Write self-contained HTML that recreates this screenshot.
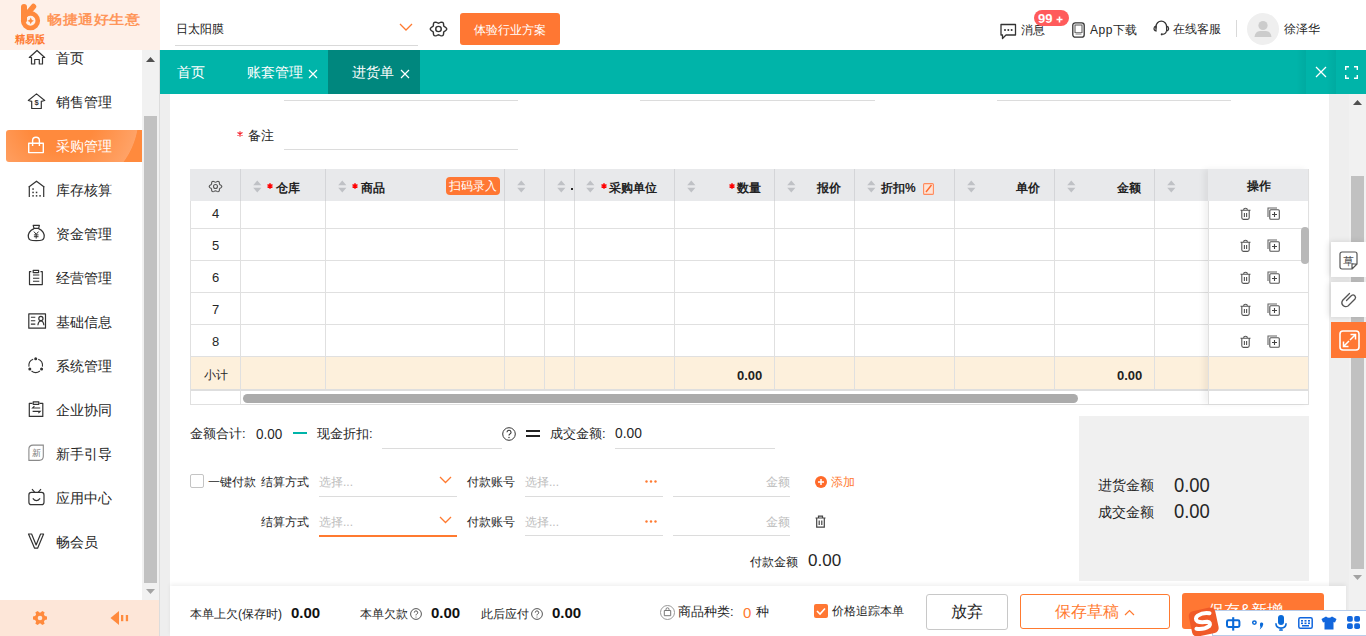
<!DOCTYPE html>
<html><head><meta charset="utf-8">
<style>
*{box-sizing:border-box;margin:0;padding:0}
html,body{width:1366px;height:636px;overflow:hidden;background:#fff;font-family:"Liberation Sans",sans-serif;color:#262626}
.a{position:absolute}
.t{position:absolute;white-space:nowrap}
.f12{font-size:12px;line-height:12px}
.f13{font-size:13px;line-height:13px}
.f14{font-size:14px;line-height:14px}
.f16{font-size:16px;line-height:16px}
svg{position:absolute;overflow:visible}
</style></head><body>

<!-- ============ SIDEBAR ============ -->
<div class="a" style="left:0;top:0;width:160px;height:50px;background:#fef0e8"></div>
<div class="a" style="left:0;top:50px;width:142px;height:550px;background:#fff"></div>
<svg style="left:0;top:0" width="60" height="50">
 <path d="M24 7V20" stroke="#ff8a3d" stroke-width="6" stroke-linecap="round" fill="none"/>
 <path d="M33.5 6.5L28 13" stroke="#ff8a3d" stroke-width="5.5" stroke-linecap="round" fill="none"/>
 <circle cx="30.5" cy="20.7" r="7.3" stroke="#ff8a3d" stroke-width="4.6" fill="none"/>
 <path d="M30.7 17.5Q31.2 20.2 34 20.8Q31.2 21.4 30.7 24.2Q30.2 21.4 27.4 20.8Q30.2 20.2 30.7 17.5Z" fill="#ff8a3d"/>
</svg>
<div class="t" style="left:47px;top:13px;font-size:15px;line-height:15px;font-weight:bold;color:#ff965a;letter-spacing:0.6px;transform:scaleY(0.86);transform-origin:0 0">畅捷通好生意</div>
<div class="t" style="left:15px;top:33px;font-size:11px;line-height:12px;font-weight:bold;color:#ff7a30;transform:scaleX(0.92);transform-origin:0 0">精易版</div>
<div class="a" style="left:0;top:600px;width:159px;height:36px;background:#fde6d8"></div>
<!-- bottom icons -->
<svg style="left:32px;top:610px" width="16" height="16" viewBox="0 0 16 16">
 <path transform="rotate(90 8 8)" d="M6.6 1H9.4L9.9 3.1L11.6 4.1L13.7 3.4L15.1 5.8L13.5 7.3V8.7L15.1 10.2L13.7 12.6L11.6 11.9L9.9 12.9L9.4 15H6.6L6.1 12.9L4.4 11.9L2.3 12.6L0.9 10.2L2.5 8.7V7.3L0.9 5.8L2.3 3.4L4.4 4.1L6.1 3.1Z" fill="#ff8a3d"/>
 <circle cx="8" cy="8" r="2.3" fill="#fde6d8"/>
</svg>
<svg style="left:110px;top:610px" width="20" height="16" viewBox="0 0 20 16">
 <path d="M0.5 8L9 1V15Z" fill="#ff8a3d"/>
 <rect x="11" y="5" width="2.3" height="6.2" fill="#ff8a3d"/>
 <rect x="15.8" y="5" width="2.3" height="6.2" fill="#ff8a3d"/>
</svg>
<!-- menu -->
<svg style="left:20px;top:44px" width="32" height="28" viewBox="20 44 32 28"><path d="M31.5 64V57.5H29.3L37 50.5L44.7 57.5H42.5V64H39.3V59.5H34.7V64Z" stroke="#333" stroke-width="1.2" fill="none" stroke-linejoin="round"/></svg>
<div class="t f14" style="left:56px;top:51px;color:#262626">首页</div>
<svg style="left:20px;top:88px" width="32" height="28" viewBox="20 88 32 28"><path d="M28.3 100.5L36.5 93.9L44.7 100.5L41.3 101.3V108.5H31.7V101.3Z" stroke="#333" stroke-width="1.2" fill="none" stroke-linejoin="round"/><text x="36.5" y="105.3" font-size="7.5" text-anchor="middle" fill="#333" font-family="Liberation Sans" font-weight="bold">$</text></svg>
<div class="t f14" style="left:56px;top:95px;color:#262626">销售管理</div>
<div class="a" style="left:6px;top:130px;width:136px;height:32px;border-radius:3px 0 0 3px;background:radial-gradient(circle 78px at 55px -14px,#ff8a3d 0%,#ff8a3d 45%,#ffa266 99%,#ff8a3d 100%)"></div>
<svg style="left:20px;top:132px" width="32" height="28" viewBox="20 132 32 28"><path d="M28.7 143.2H43.3V152.6H28.7Z M32.6 146V140.7A3.4 3.4 0 0 1 39.4 140.7V146" stroke="#fff" stroke-width="1.4" fill="none" stroke-linejoin="round"/></svg>
<div class="t f14" style="left:56px;top:139px;color:#fff">采购管理</div>
<svg style="left:20px;top:176px" width="32" height="28" viewBox="20 176 32 28"><path d="M28.5 187.2L36.5 181.2L44.5 187.2M29.3 186.6V197M43.7 186.6V197" stroke="#333" stroke-width="1.2" fill="none" stroke-linejoin="round"/><g fill="#333"><rect x="32.3" y="188.3" width="1.5" height="1.5"/><rect x="32.3" y="191.7" width="1.5" height="1.5"/><rect x="35.8" y="191.7" width="1.5" height="1.5"/><rect x="32.3" y="195.1" width="1.5" height="1.5"/><rect x="35.8" y="195.1" width="1.5" height="1.5"/><rect x="39.3" y="195.1" width="1.5" height="1.5"/></g></svg>
<div class="t f14" style="left:56px;top:183px;color:#262626">库存核算</div>
<svg style="left:20px;top:220px" width="32" height="28" viewBox="20 220 32 28"><path d="M33.2 225.4H39.4L38.6 228.4H34Z" stroke="#333" stroke-width="1.2" fill="none" stroke-linejoin="round"/><path d="M34 228.6C29 231 28 235 28.4 237.4C28.9 240 30.5 240.6 36.2 240.6C42 240.6 43.6 240 44.1 237.4C44.5 235 43.5 231 38.6 228.6" stroke="#333" stroke-width="1.2" fill="none" stroke-linejoin="round"/><path d="M33.9 231.6L36.2 234.3L38.5 231.6M36.2 234.3V238.6M33.9 234.9H38.5M33.9 236.7H38.5" stroke="#333" stroke-width="1" fill="none"/></svg>
<div class="t f14" style="left:56px;top:227px;color:#262626">资金管理</div>
<svg style="left:20px;top:264px" width="32" height="28" viewBox="20 264 32 28"><path d="M31.3 271.6H29.5V284.6H42.3V271.6H40.5" stroke="#333" stroke-width="1.2" fill="none" stroke-linejoin="round"/><path d="M33.2 272.6V270.3H38.6V272.6Z" stroke="#333" stroke-width="1.2" fill="none" stroke-linejoin="round"/><path d="M33 275H39.3M33 278.2H39.3M33 281.3H39.3" stroke="#333" stroke-width="1.1" fill="none"/></svg>
<div class="t f14" style="left:56px;top:271px;color:#262626">经营管理</div>
<svg style="left:20px;top:308px" width="32" height="28" viewBox="20 308 32 28"><path d="M28.8 313.9H45.5V328.2H28.8Z" stroke="#333" stroke-width="1.2" fill="none" stroke-linejoin="round"/><path d="M30.9 317.3H35.3M30.9 320.7H35.3M30.9 324.1H35.3" stroke="#333" stroke-width="1.1" fill="none"/><circle cx="40.9" cy="318.4" r="2.1" stroke="#333" stroke-width="1.2" fill="none" stroke-linejoin="round"/><path d="M37.9 325.3Q38.3 321 40.9 320.8Q43.5 321 43.9 325.3" stroke="#333" stroke-width="1.2" fill="none" stroke-linejoin="round"/></svg>
<div class="t f14" style="left:56px;top:315px;color:#262626">基础信息</div>
<svg style="left:20px;top:352px" width="32" height="28" viewBox="20 352 32 28"><path d="M38.25 359.30A6.8 6.8 0 0 1 42.43 366.55M39.89 370.96A6.8 6.8 0 0 1 31.51 370.96M28.97 366.55A6.8 6.8 0 0 1 33.15 359.30" stroke="#333" stroke-width="1.1" fill="none"/><circle cx="35.70" cy="358.80" r="1.5" fill="#333"/><circle cx="41.59" cy="369.00" r="1.5" fill="#333"/><circle cx="29.81" cy="369.00" r="1.5" fill="#333"/></svg>
<div class="t f14" style="left:56px;top:359px;color:#262626">系统管理</div>
<svg style="left:20px;top:396px" width="32" height="28" viewBox="20 396 32 28"><path d="M32.5 403.3H29.3V416.4H42.8V403.3H39.5" stroke="#333" stroke-width="1.2" fill="none" stroke-linejoin="round"/><path d="M33.2 404.3V401.8H38.8V404.3Z" stroke="#333" stroke-width="1.2" fill="none" stroke-linejoin="round"/><path d="M40.2 408H32.6L34.4 406.2M32.6 411.4H40.2L38.4 413.2" stroke="#333" stroke-width="1.1" fill="none"/></svg>
<div class="t f14" style="left:56px;top:403px;color:#262626">企业协同</div>
<svg style="left:20px;top:440px" width="32" height="28" viewBox="20 440 32 28"><path d="M28.9 449.2Q28.9 445.1 33 445.1H43.3V456.3Q43.3 460.4 39.2 460.4H28.9Z" stroke="#8a8a8a" stroke-width="1.1" fill="none"/><text x="36.1" y="456.4" font-size="9" text-anchor="middle" fill="#777">新</text></svg>
<div class="t f14" style="left:56px;top:447px;color:#262626">新手引导</div>
<svg style="left:20px;top:484px" width="32" height="28" viewBox="20 484 32 28"><rect x="28.9" y="492.4" width="15.1" height="12.3" rx="2.5" stroke="#333" stroke-width="1.2" fill="none" stroke-linejoin="round"/><path d="M32 489.2L34.8 492.3M41 489.2L38.2 492.3" stroke="#333" stroke-width="1.2" fill="none" stroke-linejoin="round"/><path d="M32.8 498.4Q36.4 503 40.1 498.4" stroke="#333" stroke-width="1.2" fill="none" stroke-linejoin="round"/></svg>
<div class="t f14" style="left:56px;top:491px;color:#262626">应用中心</div>
<svg style="left:20px;top:528px" width="32" height="28" viewBox="20 528 32 28"><path d="M28.5 534H31.6L36.1 545L40.6 534H43.6L37.6 548.2H34.6Z" stroke="#333" stroke-width="1.2" fill="none" stroke-linejoin="round"/></svg>
<div class="t f14" style="left:56px;top:535px;color:#262626">畅会员</div>
<!-- sidebar scrollbar -->
<div class="a" style="left:142px;top:50px;width:17px;height:550px;background:#f1f1f1"></div>
<div class="a" style="left:159px;top:50px;width:1px;height:586px;background:#dcdcdc"></div>
<div class="a" style="left:144px;top:116px;width:13px;height:467px;background:#c1c1c1"></div>
<svg style="left:146px;top:57px" width="9" height="5"><path d="M0 5L4.5 0L9 5Z" fill="#505050"/></svg>
<svg style="left:146px;top:589px" width="9" height="5"><path d="M0 0L4.5 5L9 0Z" fill="#a3a3a3"/></svg>

<!-- ============ HEADER ============ -->
<div class="t f12" style="left:176px;top:23px;color:#222">日太阳膜</div>
<div class="a" style="left:175px;top:45px;width:243px;height:1px;background:#d9d9d9"></div>
<div class="a" style="left:460px;top:13px;width:100px;height:32px;background:#ff7733;border-radius:3px"></div>
<div class="t f12" style="left:474px;top:24px;color:#fff">体验行业方案</div>

<div class="t f12" style="left:1021px;top:24px;color:#262626">消息</div>
<div class="t f12" style="left:1090px;top:24px;color:#262626;letter-spacing:0.5px">App下载</div>
<div class="t f12" style="left:1173px;top:23px;color:#262626">在线客服</div>
<div class="a" style="left:1236px;top:20px;width:1px;height:17px;background:#d9d9d9"></div>
<div class="a" style="left:1247px;top:13px;width:32px;height:32px;border-radius:50%;background:#efefef"></div>
<div class="t f12" style="left:1284px;top:23px;color:#262626">徐泽华</div>
<svg style="left:399px;top:23px" width="14" height="8"><path d="M1 1L7 7L13 1" stroke="#ff7a30" stroke-width="1.3" fill="none"/></svg>
<svg style="left:430px;top:21px" width="17" height="16" viewBox="0 0 13 13" preserveAspectRatio="none">
 <path d="M12.80 6.50 L12.51 7.29 L11.81 7.92 L11.06 8.39 L10.57 8.85 L10.41 9.50 L10.39 10.39 L10.19 11.31 L9.65 11.96 L8.82 12.10 L7.92 11.81 L7.14 11.39 L6.50 11.20 L5.86 11.39 L5.08 11.81 L4.18 12.10 L3.35 11.96 L2.81 11.31 L2.61 10.39 L2.59 9.50 L2.43 8.85 L1.94 8.39 L1.19 7.92 L0.49 7.29 L0.20 6.50 L0.49 5.71 L1.19 5.08 L1.94 4.61 L2.43 4.15 L2.59 3.50 L2.61 2.61 L2.81 1.69 L3.35 1.04 L4.18 0.90 L5.08 1.19 L5.86 1.61 L6.50 1.80 L7.14 1.61 L7.92 1.19 L8.82 0.90 L9.65 1.04 L10.19 1.69 L10.39 2.61 L10.41 3.50 L10.57 4.15 L11.06 4.61 L11.81 5.08 L12.51 5.71 L12.80 6.50Z" stroke="#333" stroke-width="1.1" fill="none"/>
 <circle cx="6.5" cy="6.5" r="2.1" stroke="#333" stroke-width="1.1" fill="none"/>
</svg>
<svg style="left:1000px;top:23px" width="17" height="17" viewBox="0 0 17 17">
 <path d="M1 1.5H15.5V12H6L2.5 15.5V12H1Z" stroke="#333" stroke-width="1.3" fill="none" stroke-linejoin="round"/>
 <circle cx="5" cy="7" r="1" fill="#333"/><circle cx="8.3" cy="7" r="1" fill="#333"/><circle cx="11.6" cy="7" r="1" fill="#333"/>
</svg>
<div class="a" style="left:1034px;top:10px;width:35px;height:16px;border-radius:8px;background:#ff5b5b"></div>
<div class="t" style="left:1038px;top:11.5px;font-size:13px;line-height:13px;font-weight:bold;color:#fff">99</div>
<svg style="left:1056px;top:16px" width="7" height="7"><path d="M3.5 0.5V6.5M0.5 3.5H6.5" stroke="#fff" stroke-width="1.6"/></svg>
<svg style="left:1072px;top:22px" width="13" height="16" viewBox="0 0 13 16">
 <rect x="0.8" y="0.8" width="11.4" height="14.4" rx="2.5" stroke="#333" stroke-width="1.3" fill="none"/>
 <rect x="3" y="3" width="7" height="7.5" fill="#fff" stroke="#555" stroke-width="1"/>
 <rect x="3.5" y="10.5" width="6" height="2.5" fill="#bbb"/>
</svg>
<svg style="left:1150px;top:16px" width="24" height="24" viewBox="1150 16 24 24">
 <path d="M1156 28.5V26.5A5.3 5.3 0 0 1 1166.6 26.5V28.5" stroke="#333" stroke-width="1.3" fill="none"/>
 <path d="M1156 26.2Q1154 26.5 1154 28.6Q1154 30.8 1156 31V26.2Z M1166.6 26.2Q1168.6 26.5 1168.6 28.6Q1168.6 30.8 1166.6 31V26.2Z" stroke="#333" stroke-width="1.2" fill="none"/>
 <path d="M1166.3 31.2Q1166 34 1162.5 34.3" stroke="#333" stroke-width="1.2" fill="none"/>
 <circle cx="1161.8" cy="34.3" r="1.1" fill="#333"/>
</svg>
<svg style="left:1247px;top:13px" width="32" height="32" viewBox="0 0 32 32">
 <circle cx="16" cy="12.5" r="4.6" fill="#cccccc"/>
 <path d="M7.5 24Q8 18.5 13 18H19Q24 18.5 24.5 24Z" fill="#cccccc"/>
</svg>

<!-- ============ TAB BAR ============ -->
<div class="a" style="left:160px;top:50px;width:1206px;height:44px;background:#00b4a9"></div>
<div class="a" style="left:328px;top:50px;width:92px;height:44px;background:#00877e"></div>
<div class="t f14" style="left:177px;top:65px;color:#fff">首页</div>
<div class="t f14" style="left:247px;top:65px;color:#fff">账套管理</div>
<div class="t f14" style="left:352px;top:65px;color:#fff">进货单</div>
<svg style="left:308px;top:69px" width="10" height="10"><path d="M1 1L9 9M9 1L1 9" stroke="#fff" stroke-width="1.2"/></svg>
<svg style="left:400px;top:69px" width="10" height="10"><path d="M1 1L9 9M9 1L1 9" stroke="#fff" stroke-width="1.2"/></svg>
<div class="a" style="left:1296px;top:50px;width:10px;height:44px;background:linear-gradient(90deg,rgba(0,0,0,0),rgba(0,0,0,0.05))"></div>
<div class="a" style="left:1326px;top:50px;width:10px;height:44px;background:linear-gradient(90deg,rgba(0,0,0,0),rgba(0,0,0,0.05))"></div>
<svg style="left:1315px;top:66px" width="12" height="12"><path d="M1 1L11 11M11 1L1 11" stroke="#fff" stroke-width="1.3"/></svg>
<svg style="left:1345px;top:66px" width="13" height="13"><path d="M0.7 4V0.7H4M9 0.7H12.3V4M12.3 9V12.3H9M4 12.3H0.7V9" stroke="#fff" stroke-width="1.4" fill="none"/></svg>

<!-- ============ CONTENT ============ -->
<div class="a" style="left:160px;top:94px;width:1206px;height:542px;background:#eeeeee"></div>
<div class="a" style="left:170px;top:94px;width:1159px;height:492px;background:#fff"></div>
<!-- right scrollbar -->
<div class="a" style="left:1349px;top:94px;width:17px;height:542px;background:#f1f1f1"></div>
<div class="a" style="left:1351px;top:176px;width:13px;height:393px;background:#c1c1c1"></div>
<svg style="left:1353px;top:100px" width="9" height="5"><path d="M0 5L4.5 0L9 5Z" fill="#505050"/></svg>
<svg style="left:1353px;top:575px" width="9" height="5"><path d="M0 0L4.5 5L9 0Z" fill="#a3a3a3"/></svg>

<!--CONTENT-->
<div class="a" style="left:284px;top:100px;width:234px;height:1px;background:#dcdcdc;"></div>
<div class="a" style="left:640px;top:100px;width:235px;height:1px;background:#dcdcdc;"></div>
<div class="a" style="left:997px;top:100px;width:234px;height:1px;background:#dcdcdc;"></div>
<svg style="left:237px;top:131px" width="6" height="6" viewBox="0 0 6 6"><path d="M3 0.2V5.8M0.5 1.5L5.5 4.5M0.5 4.5L5.5 1.5" stroke="#f5222d" stroke-width="1.1"/></svg>
<div class="t" style="left:248px;top:129px;font-size:13px;line-height:13px;color:#262626;">备注</div>
<div class="a" style="left:284px;top:149px;width:234px;height:1px;background:#dcdcdc;"></div>
<div class="a" style="left:190px;top:169px;width:1119px;height:235px;background:#fff;"></div>
<div class="a" style="left:190px;top:228px;width:1018px;height:1px;background:#e0e0e0;"></div>
<div class="a" style="left:190px;top:260px;width:1018px;height:1px;background:#e0e0e0;"></div>
<div class="a" style="left:190px;top:292px;width:1018px;height:1px;background:#e0e0e0;"></div>
<div class="a" style="left:190px;top:324px;width:1018px;height:1px;background:#e0e0e0;"></div>
<div class="a" style="left:190px;top:356px;width:1018px;height:1px;background:#e0e0e0;"></div>
<div class="a" style="left:191px;top:357px;width:1017px;height:32px;background:#fdf0dc;"></div>
<div class="a" style="left:190px;top:389px;width:1018px;height:2px;background:#dedede;"></div>
<div class="a" style="left:190px;top:404px;width:1119px;height:1px;background:#e0e0e0;"></div>
<div class="a" style="left:240px;top:169px;width:1px;height:235px;background:#e0e0e0;"></div>
<div class="a" style="left:325px;top:169px;width:1px;height:220px;background:#e0e0e0;"></div>
<div class="a" style="left:504px;top:169px;width:1px;height:220px;background:#e0e0e0;"></div>
<div class="a" style="left:544px;top:169px;width:1px;height:220px;background:#e0e0e0;"></div>
<div class="a" style="left:574px;top:169px;width:1px;height:220px;background:#e0e0e0;"></div>
<div class="a" style="left:674px;top:169px;width:1px;height:220px;background:#e0e0e0;"></div>
<div class="a" style="left:774px;top:169px;width:1px;height:220px;background:#e0e0e0;"></div>
<div class="a" style="left:854px;top:169px;width:1px;height:220px;background:#e0e0e0;"></div>
<div class="a" style="left:954px;top:169px;width:1px;height:220px;background:#e0e0e0;"></div>
<div class="a" style="left:1054px;top:169px;width:1px;height:220px;background:#e0e0e0;"></div>
<div class="a" style="left:1154px;top:169px;width:1px;height:220px;background:#e0e0e0;"></div>
<div class="a" style="left:190px;top:169px;width:1px;height:236px;background:#e0e0e0;"></div>
<div class="a" style="left:190px;top:169px;width:1119px;height:32px;background:#e8e9eb;"></div>
<div class="a" style="left:240px;top:169px;width:1px;height:32px;background:#d4d5d8;"></div>
<div class="a" style="left:325px;top:169px;width:1px;height:32px;background:#d4d5d8;"></div>
<div class="a" style="left:504px;top:169px;width:1px;height:32px;background:#d4d5d8;"></div>
<div class="a" style="left:544px;top:169px;width:1px;height:32px;background:#d4d5d8;"></div>
<div class="a" style="left:574px;top:169px;width:1px;height:32px;background:#d4d5d8;"></div>
<div class="a" style="left:674px;top:169px;width:1px;height:32px;background:#d4d5d8;"></div>
<div class="a" style="left:774px;top:169px;width:1px;height:32px;background:#d4d5d8;"></div>
<div class="a" style="left:854px;top:169px;width:1px;height:32px;background:#d4d5d8;"></div>
<div class="a" style="left:954px;top:169px;width:1px;height:32px;background:#d4d5d8;"></div>
<div class="a" style="left:1054px;top:169px;width:1px;height:32px;background:#d4d5d8;"></div>
<div class="a" style="left:1154px;top:169px;width:1px;height:32px;background:#d4d5d8;"></div>
<div class="a" style="left:1208px;top:169px;width:101px;height:235px;background:#fff;box-shadow:-4px 0 6px rgba(0,0,0,0.06)"></div>
<div class="a" style="left:1208px;top:169px;width:101px;height:32px;background:#e8e9eb;"></div>
<div class="a" style="left:1208px;top:228px;width:101px;height:1px;background:#e0e0e0;"></div>
<div class="a" style="left:1208px;top:260px;width:101px;height:1px;background:#e0e0e0;"></div>
<div class="a" style="left:1208px;top:292px;width:101px;height:1px;background:#e0e0e0;"></div>
<div class="a" style="left:1208px;top:324px;width:101px;height:1px;background:#e0e0e0;"></div>
<div class="a" style="left:1208px;top:356px;width:101px;height:1px;background:#e0e0e0;"></div>
<div class="a" style="left:1209px;top:357px;width:100px;height:32px;background:#fdf0dc;"></div>
<div class="a" style="left:1208px;top:389px;width:101px;height:2px;background:#dedede;"></div>
<div class="a" style="left:1208px;top:201px;width:1px;height:203px;background:#e0e0e0;"></div>
<div class="a" style="left:1308px;top:169px;width:1px;height:236px;background:#e0e0e0;"></div>
<div class="a" style="left:1301px;top:227px;width:8px;height:37px;background:#b8b8b8;border-radius:4px"></div>
<div class="a" style="left:243px;top:394px;width:835px;height:9px;background:#ababab;border-radius:4.5px"></div>
<svg style="left:209px;top:180px" width="13" height="13" viewBox="0 0 13 13"><path d="M12.80 6.50 L12.51 7.29 L11.81 7.92 L11.06 8.39 L10.57 8.85 L10.41 9.50 L10.39 10.39 L10.19 11.31 L9.65 11.96 L8.82 12.10 L7.92 11.81 L7.14 11.39 L6.50 11.20 L5.86 11.39 L5.08 11.81 L4.18 12.10 L3.35 11.96 L2.81 11.31 L2.61 10.39 L2.59 9.50 L2.43 8.85 L1.94 8.39 L1.19 7.92 L0.49 7.29 L0.20 6.50 L0.49 5.71 L1.19 5.08 L1.94 4.61 L2.43 4.15 L2.59 3.50 L2.61 2.61 L2.81 1.69 L3.35 1.04 L4.18 0.90 L5.08 1.19 L5.86 1.61 L6.50 1.80 L7.14 1.61 L7.92 1.19 L8.82 0.90 L9.65 1.04 L10.19 1.69 L10.39 2.61 L10.41 3.50 L10.57 4.15 L11.06 4.61 L11.81 5.08 L12.51 5.71 L12.80 6.50Z" stroke="#555" stroke-width="1.1" fill="none" transform="translate(6.5 6.5) scale(1 0.92) translate(-6.5 -6.5)"/><circle cx="6.5" cy="6.5" r="2" stroke="#555" stroke-width="1.1" fill="none"/></svg>
<svg style="left:253px;top:180px" width="9" height="13" viewBox="0 0 9 13"><path d="M0.2 5.2L4.3 0.4L8.4 5.2Z M0.2 7.8L4.3 12.6L8.4 7.8Z" fill="#bfc1c5"/></svg>
<svg style="left:338px;top:180px" width="9" height="13" viewBox="0 0 9 13"><path d="M0.2 5.2L4.3 0.4L8.4 5.2Z M0.2 7.8L4.3 12.6L8.4 7.8Z" fill="#bfc1c5"/></svg>
<svg style="left:517px;top:180px" width="9" height="13" viewBox="0 0 9 13"><path d="M0.2 5.2L4.3 0.4L8.4 5.2Z M0.2 7.8L4.3 12.6L8.4 7.8Z" fill="#bfc1c5"/></svg>
<svg style="left:557px;top:180px" width="9" height="13" viewBox="0 0 9 13"><path d="M0.2 5.2L4.3 0.4L8.4 5.2Z M0.2 7.8L4.3 12.6L8.4 7.8Z" fill="#bfc1c5"/></svg>
<svg style="left:586px;top:180px" width="9" height="13" viewBox="0 0 9 13"><path d="M0.2 5.2L4.3 0.4L8.4 5.2Z M0.2 7.8L4.3 12.6L8.4 7.8Z" fill="#bfc1c5"/></svg>
<svg style="left:687px;top:180px" width="9" height="13" viewBox="0 0 9 13"><path d="M0.2 5.2L4.3 0.4L8.4 5.2Z M0.2 7.8L4.3 12.6L8.4 7.8Z" fill="#bfc1c5"/></svg>
<svg style="left:787px;top:180px" width="9" height="13" viewBox="0 0 9 13"><path d="M0.2 5.2L4.3 0.4L8.4 5.2Z M0.2 7.8L4.3 12.6L8.4 7.8Z" fill="#bfc1c5"/></svg>
<svg style="left:867px;top:180px" width="9" height="13" viewBox="0 0 9 13"><path d="M0.2 5.2L4.3 0.4L8.4 5.2Z M0.2 7.8L4.3 12.6L8.4 7.8Z" fill="#bfc1c5"/></svg>
<svg style="left:967px;top:180px" width="9" height="13" viewBox="0 0 9 13"><path d="M0.2 5.2L4.3 0.4L8.4 5.2Z M0.2 7.8L4.3 12.6L8.4 7.8Z" fill="#bfc1c5"/></svg>
<svg style="left:1067px;top:180px" width="9" height="13" viewBox="0 0 9 13"><path d="M0.2 5.2L4.3 0.4L8.4 5.2Z M0.2 7.8L4.3 12.6L8.4 7.8Z" fill="#bfc1c5"/></svg>
<svg style="left:1167px;top:180px" width="9" height="13" viewBox="0 0 9 13"><path d="M0.2 5.2L4.3 0.4L8.4 5.2Z M0.2 7.8L4.3 12.6L8.4 7.8Z" fill="#bfc1c5"/></svg>
<svg style="left:267px;top:183px" width="6" height="6" viewBox="0 0 6 6"><path d="M3 0.2V5.8M0.5 1.6L5.5 4.4M0.5 4.4L5.5 1.6" stroke="#f00" stroke-width="1.5"/></svg>
<div class="t" style="left:276px;top:182px;font-size:12px;line-height:12px;color:#222;font-weight:bold;">仓库</div>
<svg style="left:352px;top:183px" width="6" height="6" viewBox="0 0 6 6"><path d="M3 0.2V5.8M0.5 1.6L5.5 4.4M0.5 4.4L5.5 1.6" stroke="#f00" stroke-width="1.5"/></svg>
<div class="t" style="left:361px;top:182px;font-size:12px;line-height:12px;color:#222;font-weight:bold;">商品</div>
<div class="a" style="left:446px;top:177px;width:54px;height:18px;background:#ff7733;border-radius:4px"></div>
<div class="t" style="left:449px;top:180px;font-size:12px;line-height:12px;color:#fff;">扫码录入</div>
<div class="a" style="left:571px;top:188px;width:2px;height:2px;background:#262626;"></div>
<svg style="left:601px;top:183px" width="6" height="6" viewBox="0 0 6 6"><path d="M3 0.2V5.8M0.5 1.6L5.5 4.4M0.5 4.4L5.5 1.6" stroke="#f00" stroke-width="1.5"/></svg>
<div class="t" style="left:609px;top:182px;font-size:12px;line-height:12px;color:#222;font-weight:bold;">采购单位</div>
<svg style="left:729px;top:183px" width="6" height="6" viewBox="0 0 6 6"><path d="M3 0.2V5.8M0.5 1.6L5.5 4.4M0.5 4.4L5.5 1.6" stroke="#f00" stroke-width="1.5"/></svg>
<div class="t" style="left:737px;top:182px;font-size:12px;line-height:12px;color:#222;font-weight:bold;">数量</div>
<div class="t" style="left:817px;top:182px;font-size:12px;line-height:12px;color:#222;font-weight:bold;">报价</div>
<div class="t" style="left:881px;top:182px;font-size:12px;line-height:12px;color:#222;font-weight:bold;">折扣%</div>
<svg style="left:923px;top:182px" width="11" height="13" viewBox="0 0 11 13"><rect x="0.6" y="1.6" width="9.8" height="10.8" rx="1" stroke="#ff8a5c" stroke-width="1.1" fill="#fde3d6"/><path d="M3 10L8.5 3" stroke="#ff6a2a" stroke-width="1.4"/></svg>
<div class="t" style="left:1016px;top:182px;font-size:12px;line-height:12px;color:#222;font-weight:bold;">单价</div>
<div class="t" style="left:1117px;top:182px;font-size:12px;line-height:12px;color:#222;font-weight:bold;">金额</div>
<div class="t" style="left:1247px;top:180px;font-size:12px;line-height:12px;color:#222;font-weight:bold;">操作</div>
<div class="t" style="left:212px;top:207px;font-size:13px;line-height:13px;color:#262626;">4</div>
<svg style="left:1240px;top:207px" width="11" height="13" viewBox="0 0 11 13"><path d="M0.5 3.3H10.5M3.6 3.1A1.9 1.9 0 0 1 7.4 3.1M1.8 3.6V10.8Q1.8 12.4 3.4 12.4H7.6Q9.2 12.4 9.2 10.8V3.6M4.4 6V10M6.6 6V10" stroke="#555" stroke-width="1.1" fill="none"/></svg>
<svg style="left:1267px;top:207px" width="13" height="13" viewBox="0 0 13 13"><path d="M1 10V1H10" stroke="#666" stroke-width="1.1" fill="none"/><rect x="2.8" y="2.8" width="9.5" height="9.5" rx="1" stroke="#555" stroke-width="1.1" fill="#fff"/><path d="M7.5 5V10M5 7.5H10" stroke="#444" stroke-width="1.1"/></svg>
<div class="t" style="left:212px;top:239px;font-size:13px;line-height:13px;color:#262626;">5</div>
<svg style="left:1240px;top:239px" width="11" height="13" viewBox="0 0 11 13"><path d="M0.5 3.3H10.5M3.6 3.1A1.9 1.9 0 0 1 7.4 3.1M1.8 3.6V10.8Q1.8 12.4 3.4 12.4H7.6Q9.2 12.4 9.2 10.8V3.6M4.4 6V10M6.6 6V10" stroke="#555" stroke-width="1.1" fill="none"/></svg>
<svg style="left:1267px;top:239px" width="13" height="13" viewBox="0 0 13 13"><path d="M1 10V1H10" stroke="#666" stroke-width="1.1" fill="none"/><rect x="2.8" y="2.8" width="9.5" height="9.5" rx="1" stroke="#555" stroke-width="1.1" fill="#fff"/><path d="M7.5 5V10M5 7.5H10" stroke="#444" stroke-width="1.1"/></svg>
<div class="t" style="left:212px;top:271px;font-size:13px;line-height:13px;color:#262626;">6</div>
<svg style="left:1240px;top:271px" width="11" height="13" viewBox="0 0 11 13"><path d="M0.5 3.3H10.5M3.6 3.1A1.9 1.9 0 0 1 7.4 3.1M1.8 3.6V10.8Q1.8 12.4 3.4 12.4H7.6Q9.2 12.4 9.2 10.8V3.6M4.4 6V10M6.6 6V10" stroke="#555" stroke-width="1.1" fill="none"/></svg>
<svg style="left:1267px;top:271px" width="13" height="13" viewBox="0 0 13 13"><path d="M1 10V1H10" stroke="#666" stroke-width="1.1" fill="none"/><rect x="2.8" y="2.8" width="9.5" height="9.5" rx="1" stroke="#555" stroke-width="1.1" fill="#fff"/><path d="M7.5 5V10M5 7.5H10" stroke="#444" stroke-width="1.1"/></svg>
<div class="t" style="left:212px;top:303px;font-size:13px;line-height:13px;color:#262626;">7</div>
<svg style="left:1240px;top:303px" width="11" height="13" viewBox="0 0 11 13"><path d="M0.5 3.3H10.5M3.6 3.1A1.9 1.9 0 0 1 7.4 3.1M1.8 3.6V10.8Q1.8 12.4 3.4 12.4H7.6Q9.2 12.4 9.2 10.8V3.6M4.4 6V10M6.6 6V10" stroke="#555" stroke-width="1.1" fill="none"/></svg>
<svg style="left:1267px;top:303px" width="13" height="13" viewBox="0 0 13 13"><path d="M1 10V1H10" stroke="#666" stroke-width="1.1" fill="none"/><rect x="2.8" y="2.8" width="9.5" height="9.5" rx="1" stroke="#555" stroke-width="1.1" fill="#fff"/><path d="M7.5 5V10M5 7.5H10" stroke="#444" stroke-width="1.1"/></svg>
<div class="t" style="left:212px;top:335px;font-size:13px;line-height:13px;color:#262626;">8</div>
<svg style="left:1240px;top:335px" width="11" height="13" viewBox="0 0 11 13"><path d="M0.5 3.3H10.5M3.6 3.1A1.9 1.9 0 0 1 7.4 3.1M1.8 3.6V10.8Q1.8 12.4 3.4 12.4H7.6Q9.2 12.4 9.2 10.8V3.6M4.4 6V10M6.6 6V10" stroke="#555" stroke-width="1.1" fill="none"/></svg>
<svg style="left:1267px;top:335px" width="13" height="13" viewBox="0 0 13 13"><path d="M1 10V1H10" stroke="#666" stroke-width="1.1" fill="none"/><rect x="2.8" y="2.8" width="9.5" height="9.5" rx="1" stroke="#555" stroke-width="1.1" fill="#fff"/><path d="M7.5 5V10M5 7.5H10" stroke="#444" stroke-width="1.1"/></svg>
<div class="t" style="left:204px;top:369px;font-size:12px;line-height:12px;color:#262626;">小计</div>
<div class="t" style="left:737px;top:369px;font-size:13px;line-height:13px;color:#222;font-weight:bold;">0.00</div>
<div class="t" style="left:1117px;top:369px;font-size:13px;line-height:13px;color:#222;font-weight:bold;">0.00</div>
<div class="t" style="left:190px;top:427px;font-size:13px;line-height:13px;color:#262626;">金额合计</div>
<div class="t" style="left:242px;top:427px;font-size:13px;line-height:13px;color:#262626;">:</div>
<div class="t" style="left:256px;top:426px;font-size:15px;line-height:15px;color:#262626;transform:scaleX(0.9);transform-origin:0 0">0.00</div>
<div class="a" style="left:293px;top:432px;width:14px;height:2px;background:#00b4a9;"></div>
<div class="t" style="left:317px;top:427px;font-size:13px;line-height:13px;color:#262626;">现金折扣</div>
<div class="t" style="left:369px;top:427px;font-size:13px;line-height:13px;color:#262626;">:</div>
<div class="a" style="left:382px;top:448px;width:120px;height:1px;background:#dcdcdc;"></div>
<svg style="left:502px;top:427px" width="14" height="14" viewBox="0 0 14 14"><circle cx="7" cy="7" r="6.3" stroke="#333" stroke-width="1" fill="none"/><path d="M5 5.3A2 2 0 1 1 7.6 7.2Q7 7.6 7 8.6" stroke="#333" stroke-width="1.1" fill="none"/><circle cx="7" cy="10.5" r=".7" fill="#333"/></svg>
<div class="a" style="left:526px;top:430px;width:14px;height:2px;background:#222;"></div>
<div class="a" style="left:526px;top:435px;width:14px;height:2px;background:#222;"></div>
<div class="t" style="left:550px;top:427px;font-size:13px;line-height:13px;color:#262626;">成交金额</div>
<div class="t" style="left:602px;top:427px;font-size:13px;line-height:13px;color:#262626;">:</div>
<div class="t" style="left:615px;top:425px;font-size:15px;line-height:15px;color:#262626;transform:scaleX(0.92);transform-origin:0 0">0.00</div>
<div class="a" style="left:615px;top:448px;width:160px;height:1px;background:#dcdcdc;"></div>
<div class="a" style="left:190px;top:474px;width:14px;height:14px;background:#fff;border:1px solid #c4c4c4;border-radius:2px"></div>
<div class="t" style="left:208px;top:476px;font-size:12px;line-height:12px;color:#262626;">一键付款</div>
<div class="t" style="left:261px;top:476px;font-size:12px;line-height:12px;color:#262626;">结算方式</div>
<div class="t" style="left:319px;top:476px;font-size:12px;line-height:12px;color:#bdbdbd;">选择...</div>
<svg style="left:439px;top:476px" width="13" height="8" viewBox="0 0 13 8"><path d="M1 1L6.5 6.5L12 1" stroke="#ff7a30" stroke-width="1.3" fill="none"/></svg>
<div class="a" style="left:319px;top:496px;width:138px;height:1px;background:#dcdcdc;"></div>
<div class="t" style="left:467px;top:476px;font-size:12px;line-height:12px;color:#262626;">付款账号</div>
<div class="t" style="left:525px;top:476px;font-size:12px;line-height:12px;color:#bdbdbd;">选择...</div>
<svg style="left:645px;top:480px" width="12" height="3" viewBox="0 0 12 3"><circle cx="1.5" cy="1.5" r="1.2" fill="#ff7a30"/><circle cx="6" cy="1.5" r="1.2" fill="#ff7a30"/><circle cx="10.5" cy="1.5" r="1.2" fill="#ff7a30"/></svg>
<div class="a" style="left:525px;top:496px;width:138px;height:1px;background:#dcdcdc;"></div>
<div class="a" style="left:673px;top:496px;width:117px;height:1px;background:#dcdcdc;"></div>
<div class="t" style="right:576px;top:476px;font-size:12px;line-height:12px;color:#bdbdbd;text-align:right;">金额</div>
<div class="t" style="left:261px;top:516px;font-size:12px;line-height:12px;color:#262626;">结算方式</div>
<div class="t" style="left:319px;top:516px;font-size:12px;line-height:12px;color:#bdbdbd;">选择...</div>
<svg style="left:439px;top:516px" width="13" height="8" viewBox="0 0 13 8"><path d="M1 1L6.5 6.5L12 1" stroke="#ff7a30" stroke-width="1.3" fill="none"/></svg>
<div class="a" style="left:319px;top:535px;width:138px;height:2px;background:#ff7a30;"></div>
<div class="t" style="left:467px;top:516px;font-size:12px;line-height:12px;color:#262626;">付款账号</div>
<div class="t" style="left:525px;top:516px;font-size:12px;line-height:12px;color:#bdbdbd;">选择...</div>
<svg style="left:645px;top:520px" width="12" height="3" viewBox="0 0 12 3"><circle cx="1.5" cy="1.5" r="1.2" fill="#ff7a30"/><circle cx="6" cy="1.5" r="1.2" fill="#ff7a30"/><circle cx="10.5" cy="1.5" r="1.2" fill="#ff7a30"/></svg>
<div class="a" style="left:525px;top:535px;width:138px;height:1px;background:#dcdcdc;"></div>
<div class="a" style="left:673px;top:535px;width:117px;height:1px;background:#dcdcdc;"></div>
<div class="t" style="right:576px;top:516px;font-size:12px;line-height:12px;color:#bdbdbd;text-align:right;">金额</div>
<svg style="left:815px;top:476px" width="12" height="12" viewBox="0 0 12 12"><circle cx="6" cy="6" r="6" fill="#ff6a2a"/><path d="M6 3V9M3 6H9" stroke="#fff" stroke-width="1.5"/></svg>
<div class="t" style="left:831px;top:476px;font-size:12px;line-height:12px;color:#ff7a30;">添加</div>
<svg style="left:815px;top:515px" width="11" height="13" viewBox="0 0 11 13"><path d="M0.5 3H10.5M3.5 3V1.2H7.5V3M1.7 3.5V12.2H9.3V3.5M4.2 5.5V10M6.8 5.5V10" stroke="#444" stroke-width="1.2" fill="none"/></svg>
<div class="t" style="left:750px;top:556px;font-size:12px;line-height:12px;color:#262626;">付款金额</div>
<div class="t" style="left:808px;top:552px;font-size:17px;line-height:17px;color:#262626;">0.00</div>
<div class="a" style="left:1079px;top:416px;width:230px;height:165px;background:#f0f0f0;"></div>
<div class="t" style="left:1098px;top:478px;font-size:14px;line-height:14px;color:#262626;">进货金额</div>
<div class="t" style="left:1174px;top:475px;font-size:20px;line-height:20px;color:#262626;transform:scaleX(0.92);transform-origin:0 0">0.00</div>
<div class="t" style="left:1098px;top:505px;font-size:14px;line-height:14px;color:#262626;">成交金额</div>
<div class="t" style="left:1174px;top:501px;font-size:20px;line-height:20px;color:#262626;transform:scaleX(0.92);transform-origin:0 0">0.00</div>
<div class="a" style="left:1331px;top:242px;width:35px;height:35px;background:#fff;box-shadow:-2px 0 6px rgba(0,0,0,0.12)"></div>
<div class="a" style="left:1331px;top:282px;width:35px;height:35px;background:#fff;box-shadow:-2px 0 6px rgba(0,0,0,0.12)"></div>
<div class="a" style="left:1331px;top:322px;width:35px;height:36px;background:#ff7733;"></div>
<svg style="left:1339px;top:251px" width="19" height="19" viewBox="0 0 19 19"><path d="M1 3A2 2 0 0 1 3 1H16A2 2 0 0 1 18 3V13L13 18H3A2 2 0 0 1 1 16Z M13 18V13H18" stroke="#555" stroke-width="1.2" fill="none" stroke-linejoin="round"/><text x="9.3" y="14" font-size="11" text-anchor="middle" fill="#555">草</text></svg>
<svg style="left:1340px;top:291px" width="18" height="18" viewBox="0 0 18 18"><path d="M6.5 9.5L11.5 4.5A2.5 2.5 0 0 1 15 8L8 15A4 4 0 0 1 2.5 9.5L9.5 2.5" stroke="#555" stroke-width="1.3" fill="none" stroke-linecap="round"/></svg>
<svg style="left:1339px;top:330px" width="21" height="21" viewBox="0 0 21 21"><rect x="1" y="1" width="19" height="19" rx="3" stroke="#fff" stroke-width="1.6" fill="none"/><path d="M11.5 4.5H16.5V9.5M16.5 4.5L11 10M9.5 16.5H4.5V11.5M4.5 16.5L10 11" stroke="#fff" stroke-width="1.5" fill="none"/></svg>
<!--/CONTENT-->
<!-- bottom bar -->
<div class="a" style="left:170px;top:586px;width:1176px;height:50px;background:#fff;box-shadow:0 -2px 4px rgba(0,0,0,0.06)"></div>

<!--BOTTOM-->
<div class="t" style="left:190px;top:608px;font-size:12px;line-height:12px;color:#262626;">本单上欠(保存时)</div>
<div class="t" style="left:291px;top:605px;font-size:15px;line-height:15px;color:#111;font-weight:bold;">0.00</div>
<div class="t" style="left:360px;top:608px;font-size:12px;line-height:12px;color:#262626;">本单欠款</div>
<svg style="left:410px;top:608px" width="12" height="12" viewBox="0 0 12 12"><circle cx="6" cy="6" r="5.4" stroke="#555" stroke-width="1" fill="none"/><path d="M4.3 4.6A1.7 1.7 0 1 1 6.5 6.2Q6 6.5 6 7.4" stroke="#555" stroke-width="1" fill="none"/><circle cx="6" cy="9" r=".6" fill="#555"/></svg>
<div class="t" style="left:431px;top:605px;font-size:15px;line-height:15px;color:#111;font-weight:bold;">0.00</div>
<div class="t" style="left:481px;top:608px;font-size:12px;line-height:12px;color:#262626;">此后应付</div>
<svg style="left:531px;top:608px" width="12" height="12" viewBox="0 0 12 12"><circle cx="6" cy="6" r="5.4" stroke="#555" stroke-width="1" fill="none"/><path d="M4.3 4.6A1.7 1.7 0 1 1 6.5 6.2Q6 6.5 6 7.4" stroke="#555" stroke-width="1" fill="none"/><circle cx="6" cy="9" r=".6" fill="#555"/></svg>
<div class="t" style="left:552px;top:605px;font-size:15px;line-height:15px;color:#111;font-weight:bold;">0.00</div>
<svg style="left:660px;top:605px" width="15" height="15" viewBox="0 0 15 15"><circle cx="7.5" cy="7.5" r="7" stroke="#999" stroke-width="1" fill="none"/><path d="M4.3 5.5H10.7V10.7H4.3Z M6 5.5V4.3A1.5 1.5 0 0 1 9 4.3V5.5" stroke="#777" stroke-width="1" fill="none"/></svg>
<div class="t" style="left:678px;top:605px;font-size:13px;line-height:13px;color:#262626;">商品种类</div>
<div class="t" style="left:730px;top:605px;font-size:13px;line-height:13px;color:#262626;">:</div>
<div class="t" style="left:743px;top:605px;font-size:15px;line-height:15px;color:#ff7a30;">0</div>
<div class="t" style="left:756px;top:605px;font-size:13px;line-height:13px;color:#262626;">种</div>
<div class="a" style="left:814px;top:604px;width:14px;height:14px;background:#ff7733;border-radius:2px"></div>
<svg style="left:814px;top:604px" width="14" height="14" viewBox="0 0 14 14"><path d="M3 7L6 10L11 4.5" stroke="#fff" stroke-width="1.6" fill="none"/></svg>
<div class="t" style="left:832px;top:605px;font-size:12px;line-height:12px;color:#262626;">价格追踪本单</div>
<div class="a" style="left:926px;top:594px;width:82px;height:36px;background:#fff;border:1px solid #c8c8c8;border-radius:3px"></div>
<div class="t" style="left:951px;top:604px;font-size:16px;line-height:16px;color:#262626;">放弃</div>
<div class="a" style="left:1020px;top:594px;width:150px;height:35px;background:#fff;border:1px solid #ff7a30;border-radius:3px"></div>
<div class="t" style="left:1055px;top:604px;font-size:16px;line-height:16px;color:#ff7a30;">保存草稿</div>
<svg style="left:1124px;top:609px" width="11" height="7" viewBox="0 0 11 7"><path d="M1 6L5.5 1.5L10 6" stroke="#ff7a30" stroke-width="1.2" fill="none"/></svg>
<div class="a" style="left:1182px;top:593px;width:142px;height:36px;background:#ff7733;border-radius:3px"></div>
<div class="t" style="left:1208px;top:603px;font-size:16px;line-height:16px;color:#fff;">保存&amp;新增</div>
<div class="a" style="left:1212px;top:610px;width:154px;height:26px;background:#fff;border:1px solid #b9cde9;border-right:none"></div>
<svg style="left:1187px;top:606px" width="34" height="30" viewBox="0 0 34 30"><g transform="rotate(-12 17 15)"><rect x="3" y="3" width="27" height="26" rx="5" fill="#f05a28"/><path d="M24 8.5Q18 6 12 8.5Q8 10.5 10.5 14Q13 16 20 16.5Q24 18 21 21Q15 23.5 8 21" stroke="#fff" stroke-width="4" fill="none" stroke-linecap="round"/></g></svg>
<svg style="left:1220px;top:610px" width="70" height="26" viewBox="0 0 70 26"><g fill="none" stroke="#0a6ad8"><rect x="7" y="10.3" width="12.4" height="6.6" rx="1.4" stroke-width="2"/><path d="M13.2 7.2V20.6" stroke-width="2.1"/><circle cx="34.4" cy="12.6" r="1.7" stroke-width="1.5"/></g><path d="M40 13.8A1.6 1.6 0 1 1 43.2 14.6Q43 17.5 39.6 19.8Q41.2 17 40 15.6Z" fill="#0a6ad8"/><g fill="#0a6ad8"><rect x="58" y="5" width="6" height="10" rx="3"/><rect x="59.2" y="19.3" width="3.6" height="1.5"/></g><path d="M55.9 13.2Q56 18.1 61 18.1Q66 18.1 66.1 13.2M61 18.1V19.4" stroke="#0a6ad8" stroke-width="1.6" fill="none"/></svg>
<svg style="left:1298px;top:617px" width="15" height="12" viewBox="0 0 15 12"><rect x="0.8" y="0.8" width="13.4" height="10.4" rx="1.5" stroke="#1166dd" stroke-width="1.5" fill="none"/><g fill="#1166dd"><rect x="3" y="3" width="2" height="1.6"/><rect x="6.5" y="3" width="2" height="1.6"/><rect x="10" y="3" width="2" height="1.6"/><rect x="3" y="5.5" width="2" height="1.6"/><rect x="6.5" y="5.5" width="2" height="1.6"/><rect x="10" y="5.5" width="2" height="1.6"/><rect x="4" y="8" width="7" height="1.5"/></g></svg>
<svg style="left:1321px;top:616px" width="16" height="14" viewBox="0 0 16 14"><path d="M5 0.5L0.5 3L2 6.5L3.5 6V13.5H12.5V6L14 6.5L15.5 3L11 0.5Q8 3 5 0.5Z" fill="#1166dd"/></svg>
<svg style="left:1347px;top:616px" width="13" height="13" viewBox="0 0 13 13"><g fill="#1166dd"><rect x="0" y="0" width="5.8" height="5.8" rx="1.8"/><rect x="7.2" y="0" width="5.8" height="5.8" rx="1.8"/><rect x="0" y="7.2" width="5.8" height="5.8" rx="1.8"/><rect x="7.2" y="7.2" width="5.8" height="5.8" rx="1.8"/></g></svg>
<!--/BOTTOM-->
</body></html>
